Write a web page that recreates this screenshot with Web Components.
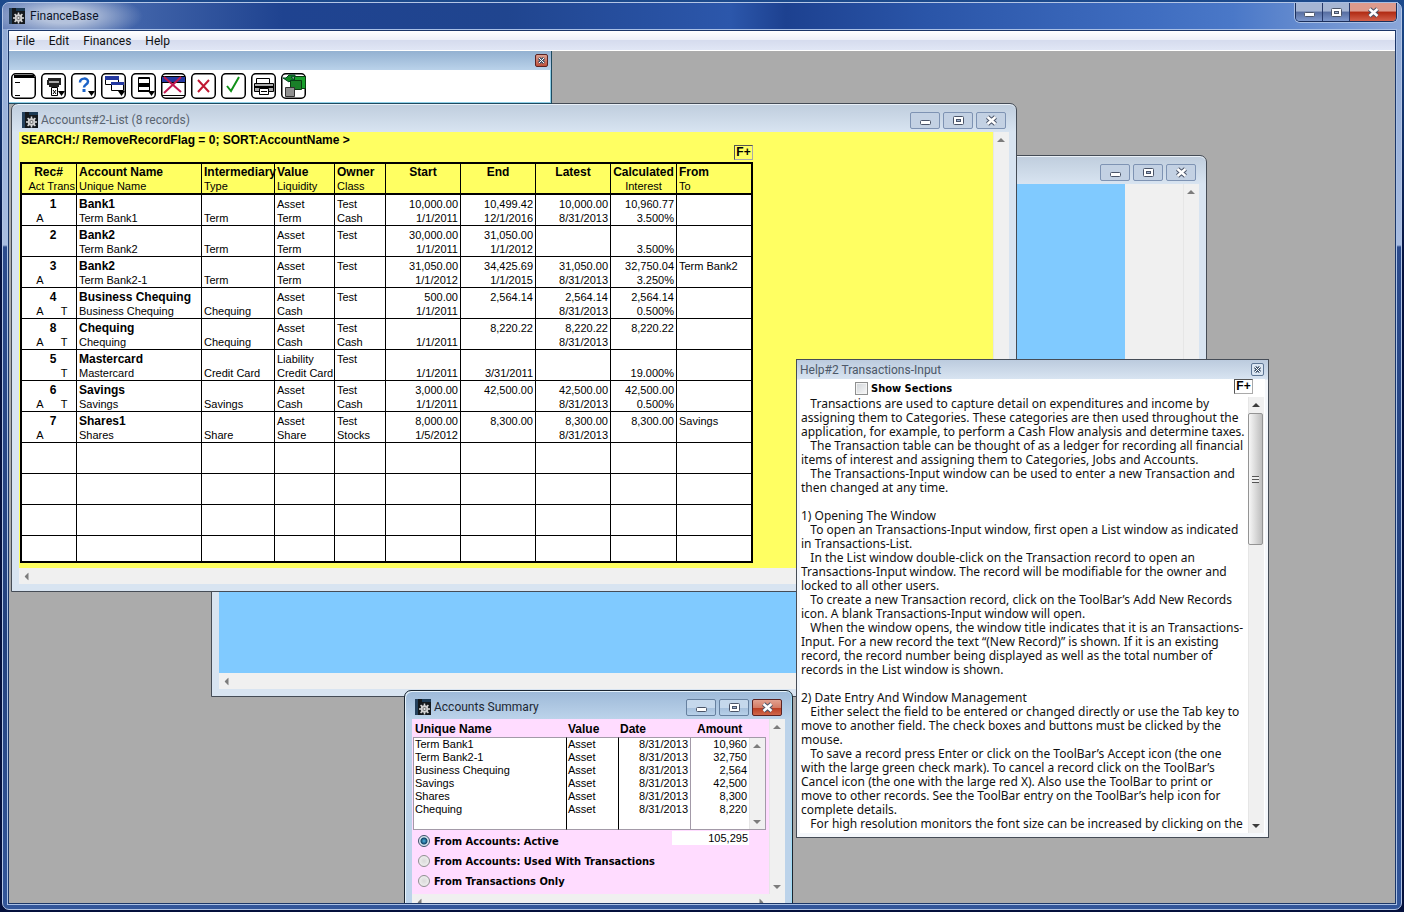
<!DOCTYPE html>
<html lang="en">
<head>
<meta charset="utf-8">
<title>FinanceBase</title>
<style>
html,body{margin:0;height:100%}
body{font-family:"Liberation Sans",Arial,sans-serif;font-size:11px;color:#000;background:#0a2257}
</style>
</head>
<body>
<finance-app></finance-app>
<script>
const define = (name, html, setup) => {
  const template = document.createElement('template');
  template.innerHTML = html;
  customElements.define(name, class extends HTMLElement {
    connectedCallback() {
      if (this.shadowRoot) return;
      this.attachShadow({mode: 'open'}).append(template.content.cloneNode(true));
      if (setup) setup(this, this.shadowRoot);
    }
  });
};

/* Gear badge used in title bars */
define('app-icon', `
<style>:host{display:block;width:16px;height:16px;flex:none}svg{display:block}</style>
<svg width="16" height="16" viewBox="0 0 16 16" aria-hidden="true">
  <rect width="16" height="16" fill="#14181c"/><path d="M0 0h3v16H0z" fill="#24405c"/><path d="M7 0h9v3H7z" fill="#1c3a54"/>
  <g stroke="#dcdcdc" stroke-width="1.500"><path d="M9.500 4.500v11M4 10h11M5.600 6.100l7.800 7.800M13.400 6.100l-7.800 7.800"/></g>
  <circle cx="9.500" cy="10" r="3.800" fill="#d0d0d0"/><circle cx="9.500" cy="10" r="2" fill="#777"/><circle cx="9.500" cy="10" r="1" fill="#eee"/>
</svg>`);

/* Minimise / maximise / close set; mode = main | active | idle */
define('caption-buttons', `
<style>
:host{display:flex;gap:3px;flex:none}
button{box-sizing:border-box;width:30px;height:17px;padding:0;border:1px solid #7e93b3;border-radius:2px;background:#c3d1e3;display:grid;place-items:center}
:host([mode=active]) button{border-color:#66809f;background:linear-gradient(#c5d8ec 50%,#a5bfdc 50%,#b8d0e8)}
:host([mode=active]) .close{border-color:#5b2222;background:linear-gradient(#e2a18f 0,#d47c66 50%,#b93a1f 50%,#d0674a)}
:host([mode=main]){gap:0;border:1px solid #1b2f5c;border-top:0;border-radius:0 0 5px 5px;overflow:hidden;box-shadow:0 0 0 1px #a9bfe4}
:host([mode=main]) button{height:18px;width:27px;border:0;border-right:1px solid #26396a;border-radius:0;background:linear-gradient(#a5b5d3 45%,#566da0 50%,#7e98cc)}
:host([mode=main]) .close{width:46px;border:0;background:linear-gradient(#dd9a8c 45%,#b02a12 50%,#d2604a)}
svg{display:block}
</style>
<button aria-label="Minimize"><svg width="13" height="11"><rect x="1.500" y="5.500" width="10" height="4" rx="1" fill="#fff" stroke="#4a5468"/></svg></button>
<button aria-label="Maximize"><svg width="13" height="11"><rect x="1.500" y="1.500" width="10" height="8" rx="1" fill="#fff" stroke="#4a5468"/><rect x="4.500" y="4.500" width="4" height="2" fill="#9fb2d0" stroke="#4a5468"/></svg></button>
<button class="close" aria-label="Close"><svg width="13" height="11"><path d="M2.500 2l8 7M10.500 2l-8 7" stroke="#4a5468" stroke-width="4.500"/><path d="M2.500 2l8 7M10.500 2l-8 7" stroke="#fff" stroke-width="2.500"/></svg></button>`);

/* Small close box of palette windows */
define('palette-close', `
<style>
:host{display:block;flex:none}
button{box-sizing:border-box;display:grid;place-items:center;width:13px;height:13px;padding:0;border:1px solid #5e7694;border-radius:2px;background:#dbe6f2}
:host([active]) button{border-color:#5b2222;background:linear-gradient(#dba091,#c0503a)}
svg{display:block}
</style>
<button aria-label="Close"><svg width="9" height="9"><path d="M2 2l5 5M7 2L2 7" stroke="#3c5068" stroke-width="3"/><path d="M2 2l5 5M7 2L2 7" stroke="#fff" stroke-width="1"/></svg></button>`);

define('scroll-bar', `
<style>
:host{display:flex;flex-direction:column;justify-content:space-between;background:#f0f0f0;box-shadow:inset 1px 0 #e6e6e6;min-width:0;min-height:0}
:host([horizontal]){flex-direction:row;box-shadow:none}
button{flex:none;box-sizing:border-box;width:16px;height:16px;padding:0;border:0;background:none;display:grid;place-items:center}
svg{display:block}path{fill:#7c7c7c}
:host([thumb]) path{fill:#3c3c3c}
:host([horizontal]) .back svg{transform:rotate(-90deg)}
:host([horizontal]) .forward svg{transform:rotate(90deg)}
:host(:not([horizontal])) .forward svg{transform:rotate(180deg)}
.thumb{display:none;box-sizing:border-box;width:15px;height:132px;margin:0 0 auto;border:1px solid #949494;border-radius:2px;background:linear-gradient(90deg,#f6f6f6,#dadada 50%,#bdbdbd);place-items:center}
.thumb i{width:7px;height:7px;background:repeating-linear-gradient(#555 0 1px,#eee 1px 3px)}
:host([thumb]) .thumb{display:grid}
</style>
<button class="back" aria-label="Scroll back"><svg width="8" height="5"><path d="M4 0l4 4H0z"/></svg></button>
<div class="thumb"><i></i></div>
<button class="forward" aria-label="Scroll forward"><svg width="8" height="5"><path d="M4 0l4 4H0z"/></svg></button>`);

define('mdi-window', `
<style>
:host{box-sizing:border-box;display:flex;flex-direction:column;position:absolute;border:1px solid #454c56;border-radius:7px 7px 0 0;padding:0 7px 7px;background:linear-gradient(#bfcddd,#d8e4f1 28px);box-shadow:inset 0 1px #eaf1f8;color:#5a6470}
:host([active]){background:linear-gradient(#9db9d8,#bcd3ea 28px);color:#1c2733;border-color:#1a2530;box-shadow:inset 1px 1px #e6f3fc,inset -1px 0 #9fdcf5}
header{flex:none;height:28px;display:flex;align-items:center;gap:3px;padding:4px 3px 0 3px;box-sizing:border-box;font:12px Roboto,"Open Sans",sans-serif}
h2{margin:0;font:inherit;flex:1;white-space:nowrap}
.body{flex:1;min-height:0;display:grid;grid-template:minmax(0,1fr) 16px/minmax(0,1fr) 16px;background:#f0f0f0;color:#000}
.view{overflow:hidden;min-width:0;display:flex}
</style>
<header><app-icon></app-icon><h2></h2><caption-buttons></caption-buttons></header>
<div class="body"><div class="view"><slot></slot></div><scroll-bar></scroll-bar><scroll-bar horizontal></scroll-bar></div>`,
(host, root) => {
  root.querySelector('h2').textContent = host.getAttribute('heading');
  root.querySelector('caption-buttons').setAttribute('mode', host.hasAttribute('active') ? 'active' : 'idle');
});

define('font-button', `
<style>:host{display:block}button{display:block;box-sizing:border-box;width:19px;height:15px;padding:0;border:1px solid #555;border-right-color:#aaa;border-bottom-color:#aaa;background:inherit;font:bold 12px/13px "Liberation Sans",Arial,sans-serif;color:#000}</style>
<button aria-label="Increase font">F+</button>`);

define('accounts-list', `
<style>
:host{display:block;flex:1;background:#ffff62;overflow:hidden}
.sheet{width:733px;margin-left:1px}
.top{height:30px;display:flex;justify-content:space-between;margin-left:1px}
.top p{margin:0;font:bold 12px/16px "Liberation Sans",Arial,sans-serif}
.top font-button{align-self:flex-end;margin:0 0 2px;background:#ffff62}
table{width:733px;table-layout:fixed;border-collapse:separate;border-spacing:0;border:2px solid #000;background:#fff;font:11px/14px "Liberation Sans",Arial,sans-serif}
th,td{box-sizing:border-box;height:31px;padding:2px 2px 0;border-right:1px solid #000;border-bottom:1px solid #000;text-align:left;vertical-align:top;white-space:nowrap;font-weight:400}
th{background:#ffff62;border-bottom-width:2px;padding-top:1px}
th:first-child{padding:1px 1px 0 0;text-align:right}
th:last-child,td:last-child{border-right:0}
tr:last-child td{border-bottom:0;height:25px}
b{font-size:12px;display:block;height:14px}
span{display:block;height:14px}
.num{text-align:right}.mid{text-align:center}
td:first-child{text-align:center;padding:2px 0 0}
td:first-child b{padding-left:8px}
.flags{display:grid;grid-template-columns:24px 24px;padding-left:6px}
</style>
<div class="sheet">
<div class="top"><p>SEARCH:/ RemoveRecordFlag = 0; SORT:AccountName &gt;</p><font-button></font-button></div>
<table>
<colgroup><col style="width:55px"><col style="width:125px"><col style="width:73px"><col style="width:60px"><col style="width:51px"><col style="width:75px"><col style="width:75px"><col style="width:75px"><col style="width:66px"><col></colgroup>
<thead><tr>
<th><b class="mid">Rec#</b><span>Act Trans</span></th>
<th><b>Account Name</b><span>Unique Name</span></th><th><b>Intermediary</b><span>Type</span></th><th><b>Value</b><span>Liquidity</span></th><th><b>Owner</b><span>Class</span></th>
<th class="mid"><b>Start</b></th><th class="mid"><b>End</b></th><th class="mid"><b>Latest</b></th><th class="mid"><b>Calculated</b><span>Interest</span></th><th><b>From</b><span>To</span></th>
</tr></thead><tbody></tbody></table></div>`,
(host, root) => {
  const rows = [
    ['1','A','','Bank1','Term Bank1','Term','Asset','Term','Test','Cash','10,000.00','1/1/2011','10,499.42','12/1/2016','10,000.00','8/31/2013','10,960.77','3.500%',''],
    ['2','','','Bank2','Term Bank2','Term','Asset','Term','Test','','30,000.00','1/1/2011','31,050.00','1/1/2012','','','','3.500%',''],
    ['3','A','','Bank2','Term Bank2-1','Term','Asset','Term','Test','','31,050.00','1/1/2012','34,425.69','1/1/2015','31,050.00','8/31/2013','32,750.04','3.250%','Term Bank2'],
    ['4','A','T','Business Chequing','Business Chequing','Chequing','Asset','Cash','Test','','500.00','1/1/2011','2,564.14','','2,564.14','8/31/2013','2,564.14','0.500%',''],
    ['8','A','T','Chequing','Chequing','Chequing','Asset','Cash','Test','Cash','','1/1/2011','8,220.22','','8,220.22','8/31/2013','8,220.22','',''],
    ['5','','T','Mastercard','Mastercard','Credit Card','Liability','Credit Card','Test','','','1/1/2011','','3/31/2011','','','','19.000%',''],
    ['6','A','T','Savings','Savings','Savings','Asset','Cash','Test','Cash','3,000.00','1/1/2011','42,500.00','','42,500.00','8/31/2013','42,500.00','0.500%',''],
    ['7','A','','Shares1','Shares','Share','Asset','Share','Test','Stocks','8,000.00','1/5/2012','8,300.00','','8,300.00','8/31/2013','8,300.00','','Savings']
  ];
  const pair = (a, b, c = '') => `<td class="${c}"><span>${a}</span><span>${b}</span></td>`;
  root.querySelector('tbody').innerHTML = rows.map(r =>
    `<tr><td><b>${r[0]}</b><div class="flags"><span>${r[1]}</span><span>${r[2]}</span></div></td><td><b>${r[3]}</b><span>${r[4]}</span></td>` +
    pair('', r[5]) + pair(r[6], r[7]) + pair(r[8], r[9]) + pair(r[10], r[11], 'num') + pair(r[12], r[13], 'num') +
    pair(r[14], r[15], 'num') + pair(r[16], r[17], 'num') + pair(r[18], '') + '</tr>').join('') +
    ('<tr>' + '<td></td>'.repeat(10) + '</tr>').repeat(4);
});

define('record-pane', `
<style>:host{display:block;flex:1;background:#f0f0f0}div{height:100%;margin-right:58px;background:#80caff}</style><div></div>`);

define('accounts-summary', `
<style>
:host{display:block;flex:1;background:#ffdcff}
.list{display:flex;margin:0 3px 0 1px}
table{flex:1;table-layout:fixed;border-collapse:separate;border-spacing:0;font:11px/13px "Liberation Sans",Arial,sans-serif}
th{height:18px;padding:2px 0 0 2px;box-sizing:border-box;text-align:left;font:bold 12px/16px "Liberation Sans",Arial,sans-serif}
th:nth-child(n+2){padding-left:1px}th:last-child{padding-left:6px}
td{height:13px;padding:0 2px 0 1px;background:#fff;border-right:1px solid #000;white-space:nowrap}
td:first-child{border-left:1px solid #a39aa8}
td:nth-child(3){border-right-color:#a39aa8}
td:last-child{border-right:0}
td:nth-child(n+3){text-align:right}
tr:first-child td{border-top:1px solid #a39aa8}
tr:last-child td{border-bottom:1px solid #a39aa8}
.list scroll-bar{width:17px;box-sizing:border-box;margin-top:18px;border:1px solid #a39aa8;border-left:0}
form{display:flex;justify-content:space-between;margin:1px 20px 0 6px}
fieldset{margin:0;padding:0;border:0}
label{display:flex;align-items:center;gap:4px;height:20px;white-space:nowrap;font:bold 11px "DejaVu Sans Condensed","DejaVu Sans",sans-serif}
input{appearance:none;box-sizing:border-box;width:12px;height:12px;margin:0;border:1px solid #8e8f8f;border-radius:50%;background:radial-gradient(#d9d9d9,#f6f6f6)}
input:checked{border-color:#3c5068;background:radial-gradient(circle,#4fb4e0 0,#12476b 3px,#d9e6ee 4px)}
output{box-sizing:border-box;width:77px;height:14px;padding-right:1px;background:#fff;text-align:right;line-height:14px}
</style>
<div class="list"><table>
<colgroup><col style="width:154px"><col style="width:52px"><col style="width:72px"><col></colgroup>
<thead><tr><th>Unique Name</th><th>Value</th><th>Date</th><th>Amount</th></tr></thead><tbody></tbody></table><scroll-bar></scroll-bar></div>
<form><fieldset>
<label><input type="radio" name="source" checked>From Accounts: Active</label>
<label><input type="radio" name="source">From Accounts: Used With Transactions</label>
<label><input type="radio" name="source">From Transactions Only</label>
</fieldset><output>105,295</output></form>`,
(host, root) => {
  root.querySelector('tbody').innerHTML = [['Term Bank1','10,960'],['Term Bank2-1','32,750'],['Business Chequing','2,564'],['Savings','42,500'],['Shares','8,300'],['Chequing','8,220']]
    .map(([n, a]) => `<tr><td>${n}</td><td>Asset</td><td>8/31/2013</td><td>${a}</td></tr>`).join('') + '<tr><td></td><td></td><td></td><td></td></tr>';
});

define('help-window', `
<style>
:host{box-sizing:border-box;display:flex;flex-direction:column;position:absolute;border:1px solid #454c56;padding:0 3px 4px;background:linear-gradient(#bccbde,#d8e4f1 19px,#f4f7fb 20px);color:#000}
header{flex:none;height:19px;display:flex;align-items:center;justify-content:space-between;color:#4c5868;font:12px Roboto,"Open Sans",sans-serif;padding-right:1px}
h2{margin:0;font:inherit;white-space:nowrap}
.tools{flex:none;height:18px;display:flex;align-items:flex-start;justify-content:space-between;padding:0 12px 0 55px;background:#fff}
label{display:flex;align-items:center;gap:3px;height:18px;font:bold 11px "DejaVu Sans Condensed","DejaVu Sans",sans-serif}
input{appearance:none;box-sizing:border-box;width:13px;height:13px;margin:0;border:1px solid #8e8f8f;background:linear-gradient(135deg,#cfd3d7,#f8f8f8);box-shadow:inset 0 0 0 1px #f4f4f4}
font-button{background:#fff}
.doc{flex:1;min-height:0;display:flex;background:#fff;padding-right:1px}
article{flex:1;min-width:0;overflow:hidden;padding-left:1px;white-space:pre;font:12px/14px "Noto Sans","Open Sans",sans-serif;color:#111}
scroll-bar{width:16px}
</style>
<header><h2>Help#2 Transactions-Input</h2><palette-close></palette-close></header>
<div class="tools"><label><input type="checkbox">Show Sections</label><font-button></font-button></div>
<div class="doc"><article>   Transactions are used to capture detail on expenditures and income by
assigning them to Categories. These categories are then used throughout the
application, for example, to perform a Cash Flow analysis and determine taxes.
   The Transaction table can be thought of as a ledger for recording all financial
items of interest and assigning them to Categories, Jobs and Accounts.
   The Transactions-Input window can be used to enter a new Transaction and
then changed at any time.

1) Opening The Window
   To open an Transactions-Input window, first open a List window as indicated
in Transactions-List.
   In the List window double-click on the Transaction record to open an
Transactions-Input window. The record will be modifiable for the owner and
locked to all other users.
   To create a new Transaction record, click on the ToolBar’s Add New Records
icon. A blank Transactions-Input window will open.
   When the window opens, the window title indicates that it is an Transactions-
Input. For a new record the text “(New Record)” is shown. If it is an existing
record, the record number being displayed as well as the total number of
records in the List window is shown.

2) Date Entry And Window Management
   Either select the field to be entered or changed directly or use the Tab key to
move to another field. The check boxes and buttons must be clicked by the
mouse.
   To save a record press Enter or click on the ToolBar’s Accept icon (the one
with the large green check mark). To cancel a record click on the ToolBar’s
Cancel icon (the one with the large red X). Also use the ToolBar to print or
move to other records. See the ToolBar entry on the ToolBar’s help icon for
complete details.
   For high resolution monitors the font size can be increased by clicking on the</article><scroll-bar thumb></scroll-bar></div>`);

define('tool-palette', `
<style>
:host{box-sizing:border-box;position:absolute;display:flex;flex-direction:column;border:1px solid #1d4a60;border-width:0 1px 1px 0;background:#fff;box-shadow:inset -1px -1px #8fd0e8}
header{height:19px;flex:none;display:flex;align-items:center;justify-content:flex-end;padding-right:3px;background:linear-gradient(#93b1d1,#bad2ea)}
nav{flex:1;display:flex;align-items:flex-start;gap:5px;padding:3px 0 0 2px}
button{flex:none;width:25px;height:26px;padding:0;border:0;background:none}
svg{display:block}
</style>
<header><palette-close active></palette-close></header><nav></nav>`,
(host, root) => {
  const drop = '<path d="M17 18h7l-3.500 5z"/>';
  const tools = [
    ['New window', '<path d="M3 2h20v3H3zM3 4h21v1H3zM4 9h5v1H4zM4 22h5v1H4z"/>'],
    ['Add new records', '<path d="M7 5h13v2H7zM6 7h14v5H6zM8 12h10v2H8z" fill="#222"/><path d="M8 8h10v2H8z" fill="#aaa"/><path d="M10.500 14.500h6v8h-6z" fill="#fff" stroke="#000"/><path d="M12 17l3 4M15 17l-3 4" stroke="#000"/>' + drop],
    ['Help', '<path d="M9 9.500c0-5 8-5 8-1 0 3-4 3-4 6" fill="none" stroke="#1a62c8" stroke-width="2.500"/><path d="M11.500 16h3v3h-3z" fill="#1a62c8"/>' + drop],
    ['Windows', '<path d="M4.500 3.500h13v8h-13zM10.500 9.500h12v8h-12z" fill="#fff" stroke="#000"/><path d="M4 3h14v4H4zM10 9h13v3H10z" fill="#2438a0"/>' + drop],
    ['Records', '<path d="M7.500 4.500h11v14h-11z" fill="#fff" stroke="#000"/><path d="M7 5h12v1H7zM7 10h12v4H7zM7 17h12v2H7z"/>' + drop],
    ['Close window', '<path d="M1 4h23v5H1z" fill="#2438a0"/><path d="M1 3h23v1H1zM1 9h23v1H1zM1 22h23v1H1z"/><path d="M3 4l17 15M20 4L3 20" stroke="#c01850" stroke-width="2"/>'],
    ['Cancel', '<path d="M7 7l11 12M18 7L7 19" stroke="#c01832" stroke-width="2"/>'],
    ['Accept', '<path d="M6 13l4 5 8-14" fill="none" stroke="#109018" stroke-width="2"/>'],
    ['Print', '<path d="M5.500 5.500h13v6h-13z" fill="#fff" stroke="#000"/><path d="M3.500 10.500h19v8h-19z" fill="#aaa" stroke="#000"/><path d="M3 13h20v2H3z"/><path d="M8.500 15.500h9v6h-9zM10 18.500h6" fill="#fff" stroke="#000"/>'],
    ['Exit', '<path d="M13.500 3.500h11v12h-11z" fill="#18a02c" stroke="#0a3c10"/><path d="M9.500 7.500h11v9h-11z" fill="#1a8028" stroke="#0a3c10"/><path d="M2 5h3l3-3h6v2h-4l4 3h-4l-2 2z" fill="#128a24" stroke="#042"/><path d="M4.500 14.500h9v9h-9z" fill="#909090" stroke="#333"/>']
  ];
  root.querySelector('nav').innerHTML = tools.map(([name, art]) =>
    `<button aria-label="${name}"><svg width="25" height="26"><rect x="0.750" y="0.750" width="23.500" height="24.500" rx="4" fill="#fff" stroke="#000" stroke-width="1.500"/>${art}</svg></button>`).join('');
});

define('finance-app', `
<style>
:host{display:flex;box-sizing:border-box;min-height:100vh;padding:2px;background:linear-gradient(#1c4a8c,#04103c 30%,#04103c)}
.frame{flex:1;min-width:0;display:flex;flex-direction:column;border:1px solid #b4c6e6;border-radius:7px;padding:0 4px 4px;background:linear-gradient(#8ea8d4,#a8bce0 242px,#2c4b8c 244px,#23417e 70%,#33569a)}
.title{flex:none;height:26px;margin:0 -4px;padding:0 4px 0 6px;display:flex;align-items:center;gap:5px;border-radius:6px 6px 0 0;font:12px Roboto,"Open Sans",sans-serif;color:#0c1428;background:radial-gradient(80px 24px at 60px 13px,#b4c2dc 30%,#b4c2dc00),linear-gradient(90deg,#5d79b4,#3f62a8 10%,#1f4390 20%,#20458f 36%,#2c57ab 52%,#1d4190 56%,#2a55a8 66%,#3f6dc0 82%,#4a78c8 88%,#8aa6d8)}
h1{flex:1;margin:0;font:inherit}
.title caption-buttons{align-self:flex-start}
.client{flex:1;display:flex;flex-direction:column;border:1px solid #1b3668;outline:1px solid #a9c0e6;margin:1px}
.menu{flex:none;height:19px;display:flex;align-items:center;gap:14px;padding-left:7px;border-bottom:1px solid #fff;background:linear-gradient(#fff,#eef1f9 45%,#d6dcee 50%,#e0e6f5)}
.menu button{padding:0;border:0;background:none;font:12px Roboto,"Open Sans",sans-serif;color:#111}
main{position:relative;flex:1;overflow:hidden;background:#ababab}
</style>
<div class="frame">
<div class="title"><app-icon></app-icon><h1>FinanceBase</h1><caption-buttons mode="main"></caption-buttons></div>
<div class="client">
<nav class="menu"><button>File</button><button>Edit</button><button>Finances</button><button>Help</button></nav>
<main>
<mdi-window heading="" style="left:202px;top:104px;width:996px;height:542px"><record-pane></record-pane></mdi-window>
<mdi-window heading="Accounts#2-List (8 records)" style="left:2px;top:52px;width:1006px;height:489px"><accounts-list></accounts-list></mdi-window>
<mdi-window active heading="Accounts Summary" style="left:395px;top:639px;width:389px;height:228px"><accounts-summary></accounts-summary></mdi-window>
<help-window style="left:787px;top:308px;width:473px;height:479px"></help-window>
<tool-palette style="left:0;top:0;width:543px;height:53px"></tool-palette>
</main></div></div>`);
</script>
</body>
</html>
